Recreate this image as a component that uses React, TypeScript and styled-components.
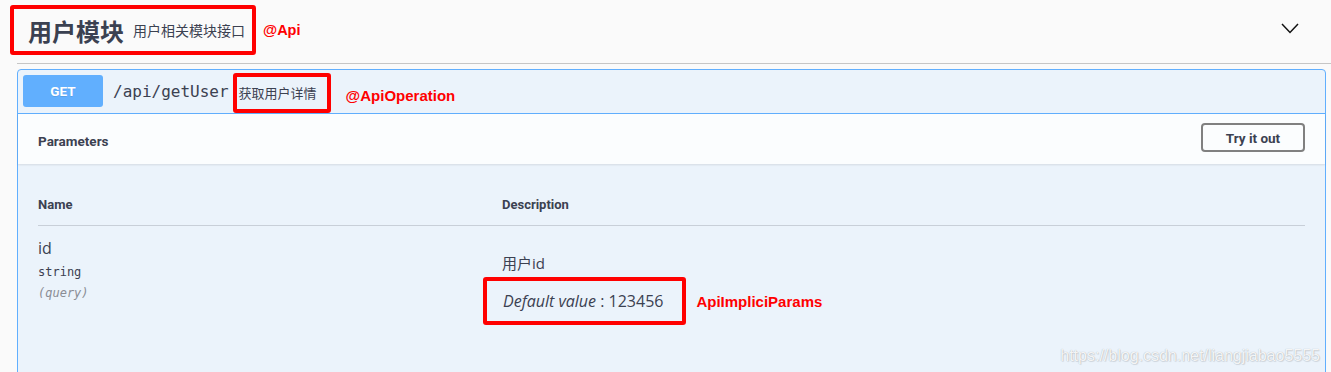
import React from 'react';
import styled, {createGlobalStyle} from 'styled-components';

const GlobalStyle = createGlobalStyle`
  html, body {
    margin: 0;
    padding: 0;
    background: #fafafa;
    overflow: hidden;
  }
  body {
    font-family: 'Open Sans', 'Noto Sans CJK SC', sans-serif;
    color: #3b4151;
  }
`;

const Page = styled.div`
  position: relative;
  height: 372px;
  padding-left: 10px;
  overflow: hidden;
`;

const TagHeader = styled.div`
  display: flex;
  align-items: center;
  height: 63px;
  padding-right: 31px;
`;

const Annotated = styled.div<{$offset?: number}>`
  display: inline-flex;
  align-items: center;
  border: 4px solid #ff0000;
  border-radius: 3px;
  margin-left: ${p => p.$offset ?? 0}px;
`;

const TagBox = styled(Annotated)`
  height: 42px;
  margin-top: -3px;
  padding: 0 7px 0 14px;
  gap: 9px;
`;

const TagTitle = styled.span`
  font-family: 'Noto Sans CJK SC', sans-serif;
  font-size: 24px;
  font-weight: 700;
  color: #3b4151;
`;

const TagDescription = styled.span`
  font-family: 'Noto Sans CJK SC', sans-serif;
  font-size: 14px;
  color: #3b4151;
`;

const Note = styled.span<{$size?: number; $gap: number; $shift?: number}>`
  font-family: 'Liberation Sans', Arial, sans-serif;
  font-weight: 700;
  font-size: ${p => p.$size ?? 15}px;
  color: #ff0000;
  margin-left: ${p => p.$gap}px;
  margin-top: ${p => p.$shift ?? 0}px;
  white-space: nowrap;
`;

const Chevron = styled.svg`
  margin-left: auto;
  margin-top: -5px;
  width: 20px;
  height: 20px;
`;

const Divider = styled.div`
  margin-left: 7px;
  height: 1px;
  background: #c6c6c6;
`;

const OpBlock = styled.div`
  margin: 5px 5px 0 7px;
  border: 1px solid #61affe;
  border-radius: 4px;
  background: #ebf3fb;
`;

const OpSummary = styled.div`
  display: flex;
  align-items: center;
  height: 43px;
  padding: 0 5px;
  border-bottom: 1px solid #61affe;
`;

const MethodBadge = styled.span`
  display: flex;
  align-items: center;
  justify-content: center;
  width: 80px;
  height: 32px;
  margin-top: -1px;
  border-radius: 3px;
  background: #61affe;
  color: #fff;
  font-family: Roboto, sans-serif;
  font-weight: 700;
  font-size: 13.5px;
  text-shadow: 0 1px 0 rgba(0, 0, 0, 0.1);
`;

const OpPath = styled.span`
  padding-left: 10px;
  font-family: 'DejaVu Sans Mono', monospace;
  font-size: 16px;
  color: #3b4151;
`;

const SummaryBox = styled(Annotated)`
  height: 32px;
  margin-top: 2px;
  padding: 0 10px 0 2px;
  font-family: 'Noto Sans CJK SC', sans-serif;
  font-size: 13px;
  color: #3b4151;
`;

const SectionHeader = styled.div`
  display: flex;
  align-items: center;
  justify-content: space-between;
  height: 50px;
  padding: 0 20px;
  background: rgba(255, 255, 255, 0.8);
  box-shadow: 0 1px 2px rgba(0, 0, 0, 0.1);
`;

const SectionTitle = styled.h4`
  margin: 3px 0 0;
  font-family: Roboto, sans-serif;
  font-size: 13.5px;
  font-weight: 700;
  color: #3b4151;
`;

const TryButton = styled.button`
  width: 104px;
  height: 29px;
  margin-top: -3px;
  border: 2px solid #808080;
  border-radius: 4px;
  background: transparent;
  font-family: Roboto, sans-serif;
  font-size: 13.5px;
  font-weight: 700;
  color: #3b4151;
`;

const TableWrap = styled.div`
  padding: 21px 20px 120px;
`;

const ParamGrid = styled.div`
  display: grid;
  grid-template-columns: 464px 1fr;
`;

const HeadCell = styled.div`
  padding: 12px 0;
  line-height: 16px;
  font-family: Roboto, sans-serif;
  font-size: 13px;
  font-weight: 700;
  color: #3b4151;
  border-bottom: 1px solid rgba(59, 65, 81, 0.2);
`;

const NameCell = styled.div`
  padding-top: 10px;
`;

const ParamName = styled.div`
  font-size: 16px;
  line-height: 24px;
  color: #3b4151;
`;

const ParamType = styled.div<{$muted?: boolean}>`
  margin-top: ${p => (p.$muted ? 5 : 4)}px;
  line-height: 16px;
  font-family: 'DejaVu Sans Mono', monospace;
  font-size: 12px;
  font-weight: 400;
  font-style: ${p => (p.$muted ? 'italic' : 'normal')};
  color: ${p => (p.$muted ? '#8a8d95' : '#3b4151')};
`;

const DescCell = styled.div`
  padding-top: 25px;
`;

const DescText = styled.div`
  font-size: 15px;
  line-height: 24px;
  color: #3b4151;
`;

const DefaultRow = styled.div`
  display: flex;
  align-items: center;
  margin-top: 2px;
`;

const DefaultBox = styled(Annotated)`
  height: 40px;
  padding: 0 19px 0 16px;
  font-size: 16px;
  color: #3b4151;
  white-space: pre;
`;

const Watermark = styled.span`
  position: absolute;
  right: 11px;
  bottom: 7px;
  font-family: 'Liberation Sans', Arial, sans-serif;
  font-size: 16px;
  color: rgba(255, 255, 255, 0.9);
  text-shadow: 0 0 1px rgba(0, 0, 0, 0.3), 1px 1px 1px rgba(0, 0, 0, 0.1);
`;

export default function App() {
  return (
    <>
      <GlobalStyle />
      <Page>
        <TagHeader>
          <TagBox>
            <TagTitle>用户模块</TagTitle>
            <TagDescription>用户相关模块接口</TagDescription>
          </TagBox>
          <Note $size={14.5} $gap={7} $shift={-4}>@Api</Note>
          <Chevron viewBox="0 0 20 20">
            <path d="M2 5 L10 13.5 L18 5" fill="none" stroke="#111" strokeWidth="1.5" />
          </Chevron>
        </TagHeader>
        <Divider />

        <OpBlock>
          <OpSummary>
            <MethodBadge>GET</MethodBadge>
            <OpPath>/api/getUser</OpPath>
            <SummaryBox $offset={4}>获取用户详情</SummaryBox>
            <Note $gap={15} $shift={8}>@ApiOperation</Note>
          </OpSummary>

          <SectionHeader>
            <SectionTitle>Parameters</SectionTitle>
            <TryButton>Try it out</TryButton>
          </SectionHeader>

          <TableWrap>
            <ParamGrid>
              <HeadCell>Name</HeadCell>
              <HeadCell>Description</HeadCell>
              <NameCell>
                <ParamName>id</ParamName>
                <ParamType>string</ParamType>
                <ParamType $muted>(query)</ParamType>
              </NameCell>
              <DescCell>
                <DescText>用户id</DescText>
                <DefaultRow>
                  <DefaultBox $offset={-19}>
                    <i>Default value</i> : 123456
                  </DefaultBox>
                  <Note $gap={10}>ApiImpliciParams</Note>
                </DefaultRow>
              </DescCell>
            </ParamGrid>
          </TableWrap>
        </OpBlock>

        <Watermark>https://blog.csdn.net/liangjiabao5555</Watermark>
      </Page>
    </>
  );
}
